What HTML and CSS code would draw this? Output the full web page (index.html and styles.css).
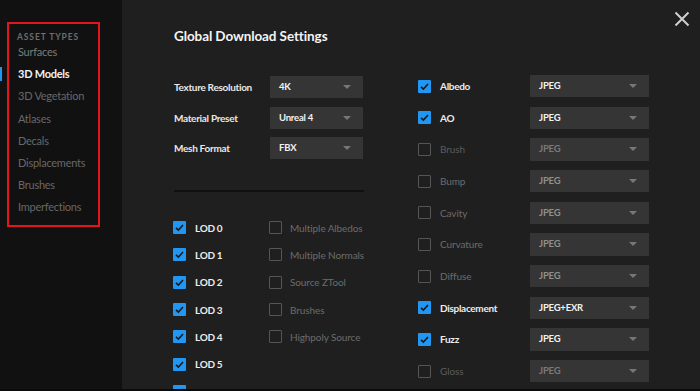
FILE: index.html
```html
<!DOCTYPE html>
<html lang="en">
<head>
<meta charset="utf-8">
<title>Global Download Settings</title>
<link rel="stylesheet" href="styles.css">
</head>
<body>
<div class="app">
  <aside class="sidebar">
    <div class="nav-title">ASSET TYPES</div>
    <ul class="nav">
      <li class="nav-item muted-light">Surfaces</li>
      <li class="nav-item active">3D Models</li>
      <li class="nav-item">3D Vegetation</li>
      <li class="nav-item">Atlases</li>
      <li class="nav-item">Decals</li>
      <li class="nav-item">Displacements</li>
      <li class="nav-item">Brushes</li>
      <li class="nav-item">Imperfections</li>
    </ul>
    <div class="highlight"></div>
  </aside>
  <main class="panel">
    <button class="close" aria-label="Close">
      <svg width="16" height="16" viewBox="0 0 16 16"><path d="M1.5 1.5 L14.5 14.5 M14.5 1.5 L1.5 14.5" stroke="#cfcfcf" stroke-width="2" fill="none"/></svg>
    </button>
    <h1 class="title">Global Download Settings</h1>
    <div class="columns">
      <div class="col-left">
        <div class="selects">
          <div class="select-row"><span class="field-label">Texture Resolution</span><div class="dropdown small">4K<i class="caret"></i></div></div>
          <div class="select-row"><span class="field-label">Material Preset</span><div class="dropdown small">Unreal 4<i class="caret"></i></div></div>
          <div class="select-row"><span class="field-label">Mesh Format</span><div class="dropdown small">FBX<i class="caret"></i></div></div>
        </div>
        <div class="divider"></div>
        <div class="lods">
          <div class="lod-col">
            <label class="check-row"><span class="box checked"></span><span class="check-label">LOD 0</span></label>
            <label class="check-row"><span class="box checked"></span><span class="check-label">LOD 1</span></label>
            <label class="check-row"><span class="box checked"></span><span class="check-label">LOD 2</span></label>
            <label class="check-row"><span class="box checked"></span><span class="check-label">LOD 3</span></label>
            <label class="check-row"><span class="box checked"></span><span class="check-label">LOD 4</span></label>
            <label class="check-row"><span class="box checked"></span><span class="check-label">LOD 5</span></label>
            <div class="check-row"><span class="box checked"></span></div>
          </div>
          <div class="lod-col extras">
            <label class="check-row"><span class="box"></span><span class="check-label off">Multiple Albedos</span></label>
            <label class="check-row"><span class="box"></span><span class="check-label off">Multiple Normals</span></label>
            <label class="check-row"><span class="box"></span><span class="check-label off">Source ZTool</span></label>
            <label class="check-row"><span class="box"></span><span class="check-label off">Brushes</span></label>
            <label class="check-row"><span class="box"></span><span class="check-label off">Highpoly Source</span></label>
          </div>
        </div>
      </div>
      <div class="col-right">
        <div class="map-row"><label class="check-row"><span class="box checked"></span><span class="check-label">Albedo</span></label><div class="dropdown wide">JPEG<i class="caret"></i></div></div>
        <div class="map-row"><label class="check-row"><span class="box checked"></span><span class="check-label">AO</span></label><div class="dropdown wide">JPEG<i class="caret"></i></div></div>
        <div class="map-row"><label class="check-row"><span class="box"></span><span class="check-label off dim">Brush</span></label><div class="dropdown wide disabled dim">JPEG<i class="caret"></i></div></div>
        <div class="map-row"><label class="check-row"><span class="box"></span><span class="check-label off">Bump</span></label><div class="dropdown wide disabled">JPEG<i class="caret"></i></div></div>
        <div class="map-row"><label class="check-row"><span class="box"></span><span class="check-label off">Cavity</span></label><div class="dropdown wide disabled">JPEG<i class="caret"></i></div></div>
        <div class="map-row"><label class="check-row"><span class="box"></span><span class="check-label off">Curvature</span></label><div class="dropdown wide disabled">JPEG<i class="caret"></i></div></div>
        <div class="map-row"><label class="check-row"><span class="box"></span><span class="check-label off">Diffuse</span></label><div class="dropdown wide disabled">JPEG<i class="caret"></i></div></div>
        <div class="map-row"><label class="check-row"><span class="box checked"></span><span class="check-label">Displacement</span></label><div class="dropdown wide">JPEG+EXR<i class="caret"></i></div></div>
        <div class="map-row"><label class="check-row"><span class="box checked"></span><span class="check-label">Fuzz</span></label><div class="dropdown wide">JPEG<i class="caret"></i></div></div>
        <div class="map-row"><label class="check-row"><span class="box"></span><span class="check-label off dim">Gloss</span></label><div class="dropdown wide disabled dim">JPEG<i class="caret"></i></div></div>
      </div>
    </div>
  </main>
</div>
</body>
</html>
```
FILE: styles.css
```css
* { box-sizing: border-box; }
html, body { margin: 0; padding: 0; }
body {
  background: #0b0b0b;
  font-family: "Lato", "Open Sans", sans-serif;
  width: 700px;
  height: 391px;
  overflow: hidden;
}
.app {
  display: flex;
  height: 389px;
  overflow: hidden;
}
.sidebar {
  position: relative;
  width: 122px;
  flex: none;
  background: #111111;
  padding: 32px 0 0 17px;
}
.nav-title {
  font-size: 8.5px;
  font-weight: 700;
  letter-spacing: 0.9px;
  color: #6e6e6e;
  line-height: 10px;
}
.nav {
  list-style: none;
  margin: -1px 0 0 1px;
  padding: 0;
}
.nav-item {
  position: relative;
  font-size: 11px;
  letter-spacing: -0.25px;
  line-height: 22.2px;
  height: 22.2px;
  color: #686868;
}
.nav-item.muted-light { color: #7c7c7c; }
.nav-item.active {
  color: #f2f2f2;
  font-weight: 700;
}
.nav-item.active::before {
  content: "";
  position: absolute;
  left: -18px;
  top: 4px;
  width: 2px;
  height: 14px;
  background: #2196f3;
}
.highlight {
  position: absolute;
  left: 7px;
  top: 22px;
  width: 93px;
  height: 205px;
  border: 2px solid #e3161b;
}
.panel {
  position: relative;
  flex: 1;
  background: #1f1f1f;
  padding: 27px 0 0 52px;
}
.close {
  position: absolute;
  top: 11px;
  right: 10px;
  width: 16px;
  height: 16px;
  padding: 0;
  border: 0;
  background: none;
}
.close svg { display: block; }
.title {
  margin: 0;
  font-size: 13.5px;
  letter-spacing: -0.1px;
  line-height: 18px;
  font-weight: 700;
  color: #f4f4f4;
}
.columns {
  display: flex;
  gap: 54px;
  margin-top: 30px;
  margin-left: -1px;
}
.col-left { width: 191px; flex: none; }
.selects {
  display: flex;
  flex-direction: column;
  gap: 8.5px;
  padding-top: 1px;
}
.select-row {
  display: flex;
  align-items: center;
  padding-left: 1px;
}
.field-label {
  width: 96px;
  font-size: 10px;
  letter-spacing: -0.3px;
  font-weight: 700;
  color: #e8e8e8;
}
.dropdown {
  position: relative;
  height: 22px;
  background: #353535;
  color: #f2f2f2;
  font-size: 9.5px;
  letter-spacing: -0.2px;
  font-weight: 700;
  line-height: 22px;
  padding-left: 9px;
}
.dropdown.small { width: 93px; }
.dropdown.wide { width: 119px; height: 22.3px; }
.dropdown.disabled { color: #8f8f8f; }
.dropdown.dim { color: #7a7a7a; }
.caret {
  position: absolute;
  right: 12px;
  top: 9px;
  width: 0;
  height: 0;
  border-left: 4px solid transparent;
  border-right: 4px solid transparent;
  border-top: 4px solid #777;
}
.divider {
  height: 2px;
  background: #101010;
  margin-top: 31px;
  margin-left: 1px;
}
.lods {
  display: flex;
  margin-top: 22px;
}
.lod-col {
  width: 96px;
  flex: none;
  display: flex;
  flex-direction: column;
}
.lod-col.extras { width: 100px; }
.check-row {
  display: flex;
  align-items: center;
  height: 27.33px;
  gap: 9px;
}
.extras .check-row { gap: 8px; }
.box {
  width: 13px;
  height: 13px;
  flex: none;
  border: 1.5px solid #555;
  border-radius: 1px;
}
.box.checked {
  border: 0;
  background: #2196f3 url("data:image/svg+xml,%3Csvg xmlns='http://www.w3.org/2000/svg' width='13' height='13' viewBox='0 0 13 13'%3E%3Cpath d='M3 6.8 L5.4 9.1 L10 4' stroke='%231a1a1a' stroke-width='1.6' fill='none'/%3E%3C/svg%3E") no-repeat center;
}
.check-label {
  font-size: 10px;
  letter-spacing: -0.3px;
  font-weight: 700;
  color: #ececec;
  white-space: nowrap;
}
.check-label.off {
  font-weight: 400;
  letter-spacing: -0.1px;
  color: #6c6c6c;
}
.check-label.dim { color: #5c5c5c; }
.col-right {
  display: flex;
  flex-direction: column;
  gap: 9.37px;
}
.map-row {
  display: flex;
  align-items: center;
  height: 22.3px;
}
.map-row .check-row {
  width: 112px;
  height: 22.3px;
}
```
